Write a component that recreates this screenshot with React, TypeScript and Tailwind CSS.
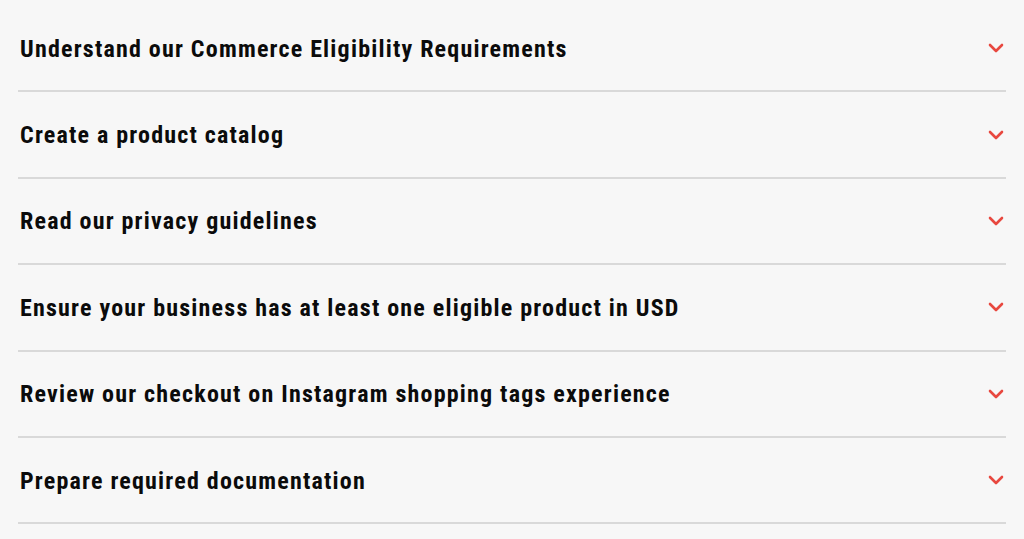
const ITEMS = [
  "Understand our Commerce Eligibility Requirements",
  "Create a product catalog",
  "Read our privacy guidelines",
  "Ensure your business has at least one eligible product in USD",
  "Review our checkout on Instagram shopping tags experience",
  "Prepare required documentation",
];

function Chevron() {
  return (
    <svg width="16" height="10" viewBox="0 0 16 10" fill="none">
      <path d="M2 2l6 6 6-6" stroke="#e8483f" strokeWidth="2.6" strokeLinecap="round" strokeLinejoin="round" />
    </svg>
  );
}

export default function App() {
  return (
    <div className="min-h-[539px] bg-[#f7f7f7] px-[18px] pt-[6px]">
      {ITEMS.map((item) => (
        <div key={item} className="flex h-[86.4px] items-center justify-between border-b-2 border-[#d9d9d9] px-[2px]">
          <span className="pt-[1px] font-['Roboto_Condensed','Roboto',sans-serif] text-[24px] font-bold tracking-[1.2px] text-[#0b0b0b]">
            {item}
          </span>
          <Chevron />
        </div>
      ))}
    </div>
  );
}
